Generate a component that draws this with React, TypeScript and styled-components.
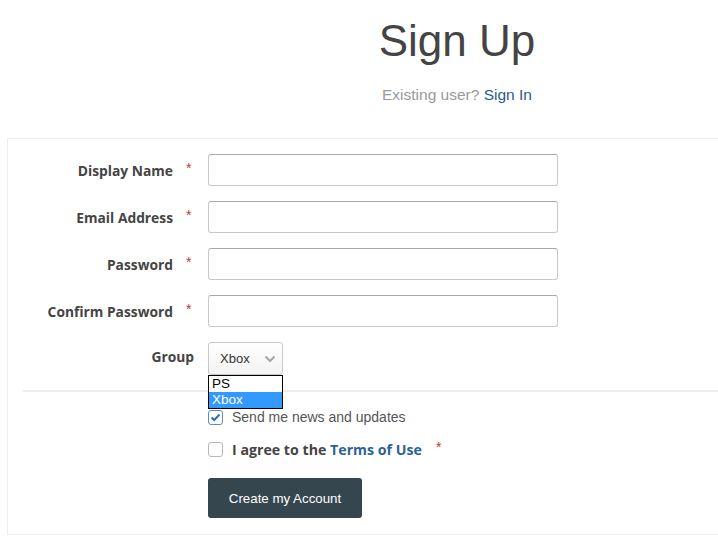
import styled, { createGlobalStyle } from 'styled-components'

const GlobalStyle = createGlobalStyle`
  html, body {
    margin: 0;
    padding: 0;
    background: #fff;
    overflow: hidden;
  }
  body {
    font-family: 'Liberation Sans', Arial, sans-serif;
  }
`

const Page = styled.div`
  width: 718px;
  height: 538px;
  padding-left: 7px;
  box-sizing: border-box;
  overflow: hidden;
`

const Header = styled.div`
  display: flex;
  flex-direction: column;
  align-items: center;
  padding-left: 189px;
  padding-top: 15px;
  height: 138px;
  box-sizing: border-box;
`

const Title = styled.h1`
  margin: 0;
  font-family: 'Liberation Sans', Arial, sans-serif;
  font-weight: normal;
  font-size: 44px;
  line-height: 52px;
  color: #444;
`

const Sub = styled.p`
  margin: 19px 0 0;
  font-size: 15.5px;
  color: #999;
`

const Link = styled.a`
  color: #2a5a87;
  text-decoration: none;
`

const Panel = styled.div`
  width: 740px;
  border: 1px solid #eee;
  border-right: none;
  padding: 15px 0 16px;
  box-sizing: border-box;
  display: flex;
  flex-direction: column;
`

const Row = styled.div`
  display: flex;
  align-items: center;
  margin-bottom: 15px;
`

const Label = styled.label<{ $width?: number; $raise?: number }>`
  width: ${({ $width }) => $width ?? 165}px;
  margin-bottom: ${({ $raise }) => ($raise ?? 0) * 2}px;
  text-align: right;
  font-family: 'Open Sans', sans-serif;
  font-weight: bold;
  font-size: 13.8px;
  color: #444;
`

const Star = styled.span`
  width: 35px;
  padding-left: 13px;
  box-sizing: border-box;
  color: #c0392b;
  font-size: 14px;
  align-self: flex-start;
  margin-top: 6px;
`

const Input = styled.input`
  width: 350px;
  height: 32px;
  box-sizing: border-box;
  border: 1px solid #c8c8c8;
  border-top-color: #a9a9a9;
  border-radius: 3px;
  padding: 0 10px;
  font-size: 14px;
`

const SelectWrap = styled.div`
  position: relative;
  margin-left: 14px;
`

const SelectBox = styled.div`
  width: 75px;
  height: 33px;
  box-sizing: border-box;
  border: 1px solid #c8c8c8;
  border-radius: 3px;
  background: linear-gradient(#fff, #f3f3f3);
  display: flex;
  align-items: center;
  justify-content: space-between;
  padding: 0 6px 0 11px;
  font-size: 13px;
  color: #333;
`

const Options = styled.ul`
  position: absolute;
  left: 0;
  top: 33px;
  width: 75px;
  margin: 0;
  padding: 0;
  list-style: none;
  border: 1px solid #000;
  box-sizing: border-box;
  background: #fff;
  z-index: 2;
`

const Option = styled.li<{ $active?: boolean }>`
  height: 16px;
  line-height: 16px;
  padding-left: 3px;
  font-size: 13.5px;
  color: ${({ $active }) => ($active ? '#fff' : '#000')};
  background: ${({ $active }) => ($active ? '#3399ff' : '#fff')};
`

const Divider = styled.hr`
  margin: 0 0 0 15px;
  border: none;
  border-top: 2px solid #eee;
`

const Checks = styled.div`
  padding-left: 200px;
  padding-top: 16px;
  display: flex;
  flex-direction: column;
`

const CheckRow = styled.div<{ $gap: number }>`
  display: flex;
  align-items: center;
  height: 18px;
  margin-bottom: ${({ $gap }) => $gap}px;
`

const Box = styled.span<{ $checked?: boolean }>`
  width: 15px;
  height: 15px;
  box-sizing: border-box;
  border: 1px solid ${({ $checked }) => ($checked ? '#5a8ec4' : '#b8b8b8')};
  border-radius: 3px;
  display: inline-flex;
  align-items: center;
  justify-content: center;
  margin-right: 9px;
`

const CheckText = styled.span`
  font-size: 14px;
  color: #555;
`

const AgreeText = styled.span`
  font-family: 'Open Sans', sans-serif;
  font-weight: bold;
  font-size: 14.2px;
  color: #444;
`

const Terms = styled.a`
  color: #2d6392;
  text-decoration: none;
`

const AgreeStar = styled.span`
  color: #c0392b;
  font-size: 14px;
  margin-left: 14px;
  align-self: flex-start;
  margin-top: -1px;
`

const Button = styled.button`
  width: 154px;
  height: 40px;
  border: none;
  border-radius: 3px;
  background: #36464f;
  color: #fff;
  font-family: 'Liberation Sans', Arial, sans-serif;
  font-size: 13.3px;
`

const fields = ['Display Name', 'Email Address', 'Password', 'Confirm Password']

export default function App() {
  return (
    <>
      <GlobalStyle />
      <Page>
        <Header>
          <Title>Sign Up</Title>
          <Sub>
            Existing user? <Link href="#">Sign In</Link>
          </Sub>
        </Header>
        <Panel>
          {fields.map((f) => (
            <Row key={f}>
              <Label>{f}</Label>
              <Star>*</Star>
              <Input type={f.includes('Password') ? 'password' : 'text'} />
            </Row>
          ))}
          <Row>
            <Label $width={186} $raise={2}>Group</Label>
            <SelectWrap>
              <SelectBox>
                Xbox
                <svg width="12" height="8" viewBox="0 0 12 8">
                  <path d="M1.5 1.5 L6 6 L10.5 1.5" stroke="#a8a8a8" strokeWidth="2.2" fill="none" />
                </svg>
              </SelectBox>
              <Options>
                <Option>PS</Option>
                <Option $active>Xbox</Option>
              </Options>
            </SelectWrap>
          </Row>
          <Divider />
          <Checks>
            <CheckRow $gap={14}>
              <Box $checked>
                <svg width="11" height="9" viewBox="0 0 11 9">
                  <path d="M1.5 4.5 L4.2 7 L9.5 1.5" stroke="#2f6fae" strokeWidth="2" fill="none" />
                </svg>
              </Box>
              <CheckText>Send me news and updates</CheckText>
            </CheckRow>
            <CheckRow $gap={20}>
              <Box />
              <AgreeText>
                I agree to the <Terms href="#">Terms of Use</Terms>
              </AgreeText>
              <AgreeStar>*</AgreeStar>
            </CheckRow>
            <div>
              <Button>Create my Account</Button>
            </div>
          </Checks>
        </Panel>
      </Page>
    </>
  )
}
